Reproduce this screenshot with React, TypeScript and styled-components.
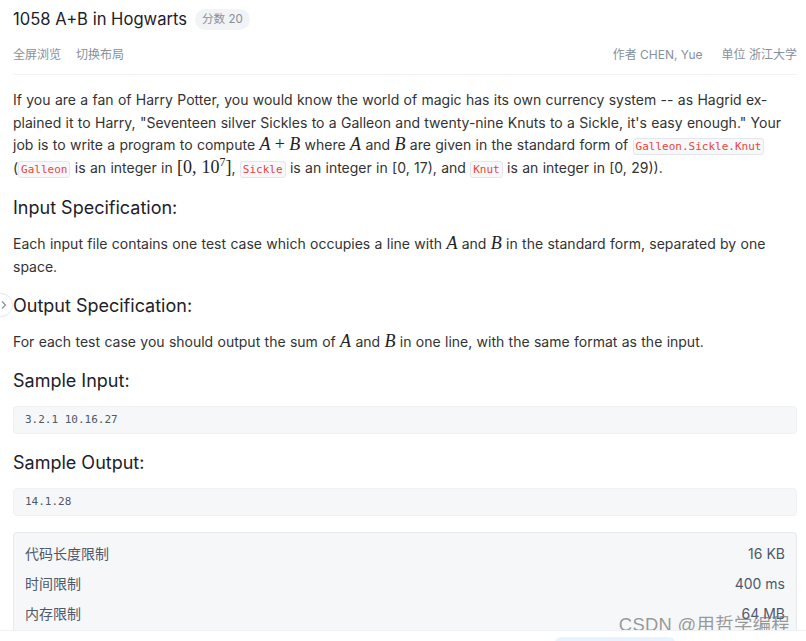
import React from "react";
import styled, { createGlobalStyle } from "styled-components";

const Global = createGlobalStyle`
  html, body { margin: 0; padding: 0; background: #fff; }
  body { font-family: Inter, "Noto Sans", "Noto Sans CJK SC", sans-serif; color: #333; overflow: hidden; }
`;

const Page = styled.div`
  position: relative;
  padding: 6px 9px 0 13px;
  height: 641px;
  box-sizing: border-box;
  overflow: hidden;
`;

const TitleRow = styled.div`
  display: flex;
  align-items: center;
  gap: 8px;
  height: 26px;
`;

const Title = styled.h1`
  margin: 0;
  font-size: 16.6px;
  font-weight: 400;
  color: #1d2129;
`;

const Badge = styled.span`
  background: #f2f3f5;
  color: #86909c;
  font-size: 11.6px;
  border-radius: 11px;
  padding: 2px 7px;
  line-height: 17px;
`;

const MetaRow = styled.div`
  display: flex;
  justify-content: space-between;
  align-items: center;
  margin-top: 13px;
  padding-bottom: 9px;
  border-bottom: 1px solid #f0f1f3;
  font-size: 12px;
  color: #86909c;
  line-height: 20px;
`;

const MetaGroup = styled.div`
  display: flex;
  gap: 15px;
`;

const MetaRight = styled.div`
  display: flex;
  gap: 19px;
`;

const Para = styled.p<{ $top?: number }>`
  margin: ${(p) => p.$top ?? 0}px 0 0 0;
  font-size: 14px;
  line-height: 22.7px;
  color: #333;
  hyphens: manual;
  word-spacing: 0.4px;
`;

const M = styled.span`
  font-family: "Liberation Serif", "DejaVu Serif", serif;
  font-style: italic;
  font-size: 18px;
  line-height: 0;
  color: #222;
`;

const MR = styled.span`
  font-family: "Liberation Serif", "DejaVu Serif", serif;
  font-size: 18px;
  line-height: 0;
  color: #222;
  sup { font-size: 12px; line-height: 0; }
`;

const Code = styled.code`
  font-family: "DejaVu Sans Mono", "Liberation Mono", monospace;
  font-size: 11px;
  line-height: 0;
  color: #e8453c;
  background: #f7f8fa;
  border: 1px solid #e5e6eb;
  border-radius: 3px;
  padding: 1px 2px;
  word-spacing: 0;
`;

const H2 = styled.h2<{ $top: number }>`
  margin: ${(p) => p.$top}px 0 0 0;
  font-size: 18px;
  font-weight: 400;
  color: #1d2129;
  line-height: 26px;
`;

const Pre = styled.div<{ $top: number }>`
  margin-top: ${(p) => p.$top}px;
  background: #f6f7f9;
  border: 1px solid #f0f1f3;
  border-radius: 4px;
  height: 28px;
  box-sizing: border-box;
  display: flex;
  align-items: center;
  padding-left: 11px;
  font-family: "DejaVu Sans Mono", "Liberation Mono", monospace;
  font-size: 11px;
  color: #4e5969;
`;

const LimitBox = styled.div`
  margin-top: 16px;
  background: #f6f7f9;
  border: 1px solid #e8e9ec;
  border-radius: 4px;
  padding: 6px 11px 20px 11px;
`;

const LimitRow = styled.div`
  display: flex;
  justify-content: space-between;
  font-size: 14px;
  line-height: 30px;
  color: #4e5969;
`;

const Toggle = styled.div`
  position: absolute;
  left: -11px;
  top: 293px;
  width: 24px;
  height: 24px;
  border-radius: 50%;
  border: 1px solid #e5e6eb;
  background: rgba(255,255,255,0.92);
  display: flex;
  align-items: center;
  justify-content: flex-end;
  padding-right: 4px;
  box-sizing: border-box;
  color: #86909c;
`;

const Watermark = styled.div`
  position: absolute;
  right: 16px;
  top: 610px;
  font-size: 18.4px;
  color: rgba(120, 120, 120, 0.75);
  font-family: "Liberation Sans", "Noto Sans CJK SC", sans-serif;
  letter-spacing: 0.3px;
`;

const Footer = styled.div`
  position: absolute;
  left: 0;
  right: 0;
  top: 630px;
  height: 11px;
  background: #fff;
  border-top: 1px solid #f0f1f3;
`;

const FooterPill = styled.div`
  position: absolute;
  left: 555px;
  top: 6px;
  width: 120px;
  height: 20px;
  border-radius: 6px;
  background: #e8f3ff;
`;

export default function App() {
  return (
    <>
      <Global />
      <Page>
        <TitleRow>
          <Title>1058 A+B in Hogwarts</Title>
          <Badge>分数 20</Badge>
        </TitleRow>
        <MetaRow>
          <MetaGroup>
            <span>全屏浏览</span>
            <span>切换布局</span>
          </MetaGroup>
          <MetaRight>
            <span>作者 CHEN, Yue</span>
            <span>单位 浙江大学</span>
          </MetaRight>
        </MetaRow>
        <Para $top={14}>
          If you are a fan of Harry Potter, you would know the world of magic has its own currency system -- as Hagrid ex{"\u00AD"}plained it to Harry, "Seventeen silver Sickles to a Galleon and twenty-nine Knuts to a Sickle, it's easy enough." Your job is to write a program to compute <M>A</M> <MR>+</MR> <M>B</M> where <M>A</M> and <M>B</M> are given in the standard form of <Code>Galleon.Sickle.Knut</Code> (<Code>Galleon</Code> is an integer in <MR>[0, 10<sup>7</sup>]</MR>, <Code>Sickle</Code> is an integer in [0, 17), and <Code>Knut</Code> is an integer in [0, 29)).
        </Para>
        <H2 $top={15}>Input Specification:</H2>
        <Para $top={12}>
          Each input file contains one test case which occupies a line with <M>A</M> and <M>B</M> in the standard form, separated by one space.
        </Para>
        <H2 $top={15}>Output Specification:</H2>
        <Para $top={12}>
          For each test case you should output the sum of <M>A</M> and <M>B</M> in one line, with the same format as the input.
        </Para>
        <H2 $top={14}>Sample Input:</H2>
        <Pre $top={12}>3.2.1 10.16.27</Pre>
        <H2 $top={16}>Sample Output:</H2>
        <Pre $top={12}>14.1.28</Pre>
        <LimitBox>
          <LimitRow><span>代码长度限制</span><span>16 KB</span></LimitRow>
          <LimitRow><span>时间限制</span><span>400 ms</span></LimitRow>
          <LimitRow><span>内存限制</span><span>64 MB</span></LimitRow>
        </LimitBox>
        <Toggle>
          <svg width="8" height="10" viewBox="0 0 8 10"><path d="M2 1.5 L5.5 5 L2 8.5" fill="none" stroke="currentColor" strokeWidth="1.2" /></svg>
        </Toggle>
        <Watermark>CSDN @用哲学编程</Watermark>
        <Footer><FooterPill /></Footer>
      </Page>
    </>
  );
}
